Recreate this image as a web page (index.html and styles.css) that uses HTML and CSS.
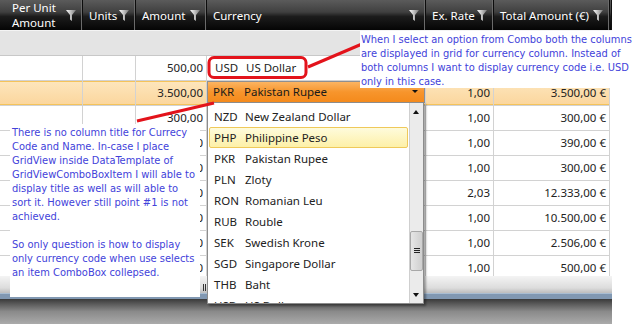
FILE: index.html
```html
<!DOCTYPE html>
<html>
    <head>
        <title>Grid currency combo</title>
        <meta charset="UTF-8">
        <link rel="stylesheet" href="styles.css">
    </head>
    <body>
        <div class="screen">
        <div class="grid">
            <div class="head">
                <div class="hcell"><span class="two">Per Unit<br>Amount</span><svg class="funnel" width="10" height="11" viewBox="0 0 10 11"><polygon points="0,0 10,0 6,5 6,11 4,9.5 4,5" fill="url(#fg)"/></svg></div>
                <div class="hcell"><span>Units</span><svg class="funnel" width="10" height="11" viewBox="0 0 10 11"><polygon points="0,0 10,0 6,5 6,11 4,9.5 4,5" fill="url(#fg)"/></svg></div>
                <div class="hcell"><span>Amount</span><svg class="funnel" width="10" height="11" viewBox="0 0 10 11"><polygon points="0,0 10,0 6,5 6,11 4,9.5 4,5" fill="url(#fg)"/></svg></div>
                <div class="hcell"><span>Currency</span><svg class="funnel" width="10" height="11" viewBox="0 0 10 11"><polygon points="0,0 10,0 6,5 6,11 4,9.5 4,5" fill="url(#fg)"/></svg></div>
                <div class="hcell"><span>Ex. Rate</span><svg class="funnel" width="10" height="11" viewBox="0 0 10 11"><polygon points="0,0 10,0 6,5 6,11 4,9.5 4,5" fill="url(#fg)"/></svg></div>
                <div class="hcell"><span>Total Amount (&euro;)</span><svg class="funnel" width="10" height="11" viewBox="0 0 10 11"><polygon points="0,0 10,0 6,5 6,11 4,9.5 4,5" fill="url(#fg)"/></svg></div>
                <div class="hend"></div>
            </div>
            <div class="band"></div>
            <div class="body">
                <div class="row"><div class="cell"></div><div class="cell"></div><div class="cell num">500,00</div><div class="cell cur"><b>USD</b>US Dollar</div><div class="cell num"></div><div class="cell num"></div></div>
                <div class="row sel"><div class="cell"></div><div class="cell"></div><div class="cell num">3.500,00</div><div class="cell cur"></div><div class="cell num">1,00</div><div class="cell num">3.500,00 &euro;</div></div>
                <div class="row"><div class="cell"></div><div class="cell"></div><div class="cell num">300,00</div><div class="cell cur"></div><div class="cell num">1,00</div><div class="cell num">300,00 &euro;</div></div>
                <div class="row"><div class="cell"></div><div class="cell"></div><div class="cell num">390,00</div><div class="cell cur"></div><div class="cell num">1,00</div><div class="cell num">390,00 &euro;</div></div>
                <div class="row"><div class="cell"></div><div class="cell"></div><div class="cell num">300,00</div><div class="cell cur"></div><div class="cell num">1,00</div><div class="cell num">300,00 &euro;</div></div>
                <div class="row"><div class="cell"></div><div class="cell"></div><div class="cell num">6.075,00</div><div class="cell cur"></div><div class="cell num">2,03</div><div class="cell num">12.333,00 &euro;</div></div>
                <div class="row"><div class="cell"></div><div class="cell"></div><div class="cell num">10.500,00</div><div class="cell cur"></div><div class="cell num">1,00</div><div class="cell num">10.500,00 &euro;</div></div>
                <div class="row"><div class="cell"></div><div class="cell"></div><div class="cell num">2.506,00</div><div class="cell cur"></div><div class="cell num">1,00</div><div class="cell num">2.506,00 &euro;</div></div>
                <div class="row"><div class="cell"></div><div class="cell"></div><div class="cell num">500,00</div><div class="cell cur"></div><div class="cell num">1,00</div><div class="cell num">500,00 &euro;</div></div>
            </div>
            <div class="hscroll"><div class="thumb"><span class="grip"></span></div></div>
            <div class="rule"></div>
            <div class="status"></div>
        </div>

        <!-- combo editor + open dropdown -->
        <div class="combo"><b>PKR</b>Pakistan Rupee<span class="arrow"></span></div>
        <div class="popup">
            <div class="list">
                <div class="item"><b>NZD</b>New Zealand Dollar</div>
                <div class="item hot"><b>PHP</b>Philippine Peso</div>
                <div class="item"><b>PKR</b>Pakistan Rupee</div>
                <div class="item"><b>PLN</b>Zloty</div>
                <div class="item"><b>RON</b>Romanian Leu</div>
                <div class="item"><b>RUB</b>Rouble</div>
                <div class="item"><b>SEK</b>Swedish Krone</div>
                <div class="item"><b>SGD</b>Singapore Dollar</div>
                <div class="item"><b>THB</b>Baht</div>
                <div class="item"><b>USD</b>US Dollar</div>
            </div>
            <div class="vscroll">
                <div class="up"></div>
                <div class="track"><div class="vthumb"><span class="vgrip"></span></div></div>
                <div class="down"></div>
            </div>
        </div>

        <svg class="marks" width="637" height="324">
            <defs>
                <linearGradient id="fg" x1="0" x2="1" y1="0" y2="0">
                    <stop offset="0" stop-color="#ffffff"/>
                    <stop offset="1" stop-color="#7a7a7a"/>
                </linearGradient>
            </defs>
            <rect x="209" y="57.5" width="97" height="20" rx="5" fill="none" stroke="#e3131b" stroke-width="3"/>
            <line x1="308" y1="67" x2="362" y2="44" stroke="#e3131b" stroke-width="3"/>
            <line x1="137" y1="121" x2="214" y2="103" stroke="#e3131b" stroke-width="3"/>
        </svg>

        <div class="note top">When I select an option from Combo both the columns<br>are displayed in grid for currency column. Instead of<br>both columns I want to display currency code i.e. USD<br>only in this case.</div>
        <div class="note side">There is no column title for Currecy<br>Code and Name. In-case I place<br>GridView inside DataTemplate of<br>GridViewComboBoxItem I will able to<br>display title as well as will able to<br>sort it. However still point #1 is not<br>achieved.<br><br>So only question is how to display<br>only currency code when use selects<br>an item ComboBox collepsed.</div>
        </div>
    </body>
</html>
```

FILE: styles.css
```css
body{
    margin: 0;
    background: #fff;
    font-family: "Noto Sans", "Open Sans", sans-serif;
    font-size: 11.5px;
    color: #222;
}
.screen{
    position: relative;
    width: 637px;
    height: 324px;
    overflow: hidden;
    background: #fff;
}
.grid{
    width: 612px;
}
.head{
    display: grid;
    grid-template-columns: 83px 53px 71px 219px 68px 116px 1fr;
    height: 30px;
    background: linear-gradient(#5b5b5b 0%, #404040 40%, #1c1c1c 55%, #050505 100%);
    color: #fff;
}
.hcell{
    display: flex;
    align-items: center;
    justify-content: space-between;
    padding: 0 6px 0 6px;
    border-right: 1px solid #0c0c0c;
    box-shadow: inset -1px 0 0 #6b6b6b;
    white-space: nowrap;
}
.hcell .two{
    line-height: 15px;
    padding-left: 6px;
}
.funnel{
    flex: none;
}
.hend{
    border-right: 1px solid #111;
}
.band{
    height: 24px;
    background: #e4e4e4;
    border-top: 1px solid #f4f4f4;
}
.body{
    height: 221px;
    overflow: hidden;
    border-top: 1px solid #c8c8c8;
    box-sizing: border-box;
    width: 610px;
}
.row{
    display: grid;
    grid-template-columns: 83px 53px 71px 219px 68px 116px;
    height: 25px;
}
.cell{
    border-right: 1px solid #d2d2d2;
    border-bottom: 1px solid #d2d2d2;
    line-height: 24px;
    padding: 0 3px;
    white-space: nowrap;
    overflow: hidden;
}
.num{
    text-align: right;
}
.cur{
    padding-left: 8px;
}
.cur b, .combo b, .item b{
    display: inline-block;
    width: 31px;
    font-weight: normal;
}
.row.sel{
    background: linear-gradient(#fde6bd, #fbd59b);
    box-shadow: inset 0 1px 0 #f5c35a, inset 0 -2px 0 #f5c35a;
}
.hscroll{
    height: 17px;
    background: linear-gradient(#f4f4f4, #dcdcdc 70%, #bdbdbd);
    position: relative;
}
.thumb{
    margin-left: 2px;
    width: 406px;
    height: 12px;
    padding-top: 3px;
    text-align: center;
}
.grip{
    display: inline-block;
    width: 5px;
    height: 7px;
    margin-top: 1px;
    background: repeating-linear-gradient(90deg, #333 0 1px, transparent 1px 2px);
}
.rule{
    height: 5px;
    background: #8198b2;
    border-top: 1px solid #a9bdd2;
}
.status{
    height: 25px;
    background: linear-gradient(#3a3a3a, #8a8a8a 50%, #aaaaaa);
}

/* combo editor */
.combo{
    position: absolute;
    left: 207px;
    top: 81px;
    width: 211px;
    height: 20px;
    padding-left: 5px;
    line-height: 20px;
    background: linear-gradient(#fcb461, #f7952c 50%, #f48a1c);
    border: 1px solid #8f8f8f;
    white-space: nowrap;
    color: #1a1a1a;
}
.combo .arrow{
    position: absolute;
    right: 6px;
    top: 8px;
    border-left: 3px solid transparent;
    border-right: 3px solid transparent;
    border-top: 3px solid #111;
}
.popup{
    position: absolute;
    left: 207px;
    top: 102px;
    width: 215px;
    height: 200px;
    background: #fff;
    border: 1px solid #8c8c8c;
    box-shadow: 2px 2px 2px rgba(0,0,0,0.35);
    display: flex;
}
.list{
    flex: 1;
    overflow: hidden;
    padding-top: 3px;
}
.item{
    height: 21px;
    line-height: 21px;
    padding-left: 5px;
    margin: 0 1px 0 1px;
    white-space: nowrap;
    color: #222;
    box-sizing: border-box;
}
.item.hot{
    background: linear-gradient(#fefbdc, #fdf0a8);
    border: 1px solid #efc95a;
    border-radius: 2px;
    line-height: 19px;
    padding-left: 4px;
}
.vscroll{
    width: 13px;
    display: flex;
    flex-direction: column;
    background: #ebebeb;
    border-left: 1px solid #cfcfcf;
}
.up, .down{
    height: 16px;
    position: relative;
}
.up:after, .down:after{
    content: "";
    position: absolute;
    left: 3px;
    border-left: 3px solid transparent;
    border-right: 3px solid transparent;
}
.up:after{
    top: 7px;
    border-bottom: 4px solid #111;
}
.down:after{
    top: 6px;
    border-top: 4px solid #111;
}
.track{
    flex: 1;
}
.vthumb{
    margin-top: 112px;
    height: 38px;
    background: linear-gradient(90deg, #e6e6e6, #cfcfcf);
    border: 1px solid #a8a8a8;
    border-radius: 2px;
    position: relative;
}
.vgrip{
    position: absolute;
    left: 3px;
    top: 16px;
    width: 6px;
    height: 5px;
    background: repeating-linear-gradient(#222 0 1px, transparent 1px 2px);
}

.marks{
    position: absolute;
    left: 0;
    top: 0;
    pointer-events: none;
}
.note{
    position: absolute;
    background: #fff;
    color: #4242da;
    font-family: "DejaVu Sans Condensed", "DejaVu Sans", sans-serif;
    font-size: 11px;
    line-height: 14px;
    white-space: nowrap;
}
.note.top{
    left: 360px;
    top: 31px;
    width: 276px;
    height: 57px;
    padding: 2px 0 0 1px;
    box-sizing: border-box;
}
.note.side{
    left: 10px;
    top: 124px;
    width: 190px;
    height: 173px;
    padding: 2px 0 0 2px;
    box-sizing: border-box;
}
```
